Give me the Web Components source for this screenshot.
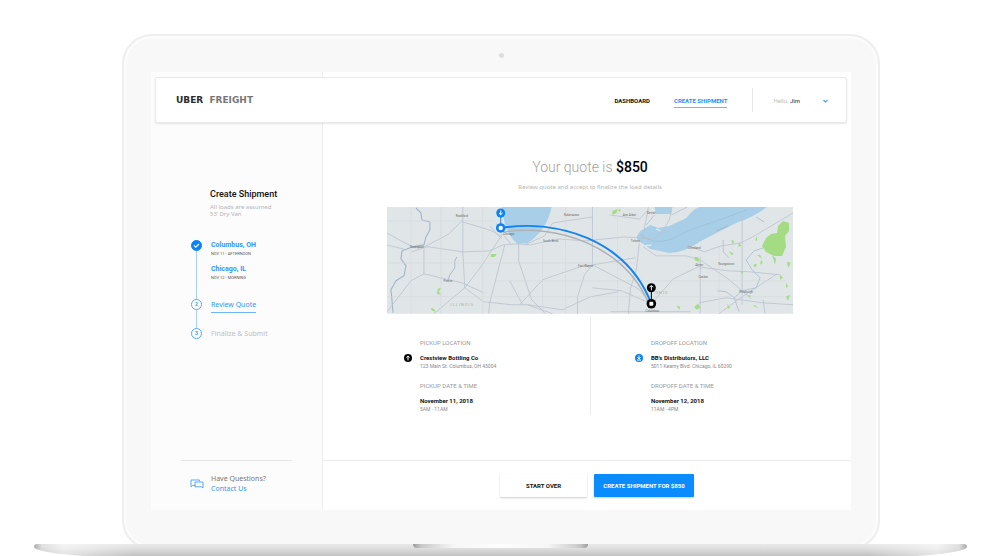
<!DOCTYPE html>
<html lang="en">
<head>
<meta charset="utf-8">
<meta name="viewport" content="width=device-width, initial-scale=1">
<title>Uber Freight – Create Shipment</title>
<style>
  body { margin: 0; background: #fff; font-family: Roboto, "Noto Sans", sans-serif; color: #111; }
</style>
</head>
<body>
<laptop-frame>
  <freight-app></freight-app>
</laptop-frame>

<script>
const define = (name, html, setup) => {
  const template = document.createElement('template');
  template.innerHTML = '<style>*{box-sizing:border-box}a{color:inherit;text-decoration:none}</style>' + html;
  customElements.define(name, class extends HTMLElement {
    constructor() {
      super();
      this.attachShadow({ mode: 'open' }).append(template.content.cloneNode(true));
    }
    connectedCallback() { if (setup) setup(this, this.shadowRoot); }
  });
};

/* Laptop body around the screen */
define('laptop-frame', `
<style>
  :host { display: flex; flex-direction: column; height: 100vh; padding: 34px 33px 0 34px; overflow: hidden; box-sizing: border-box; }
  .lid { flex: 1; display: flex; flex-direction: column; margin: 0 87px -6px 88px; padding: 16px 27px 38px;
    border: 2px solid #eee; border-radius: 30px; background: #f8f8f8; box-shadow: inset 0 0 0 2px #fcfcfc; }
  .camera { align-self: center; width: 5px; height: 5px; margin: 1px 0 14px; border-radius: 50%; background: #dedede; }
  .screen { flex: 1; display: grid; background: #fff; }
  .base { position: relative; height: 12px; flex: none; overflow: hidden; border-radius: 3px 3px 0 0; }
  .deck { height: 16px; display: flex; justify-content: center; align-items: flex-start;
    border-radius: 0 0 180px 180px / 0 0 13px 13px;
    background: linear-gradient(90deg, #aaa 0, #ddd8 8px, #fff8 30px, #fff0 100px, #fff0 calc(100% - 100px), #fff8 calc(100% - 30px), #ddd8 calc(100% - 8px), #aaa 100%),
      linear-gradient(#e9e9e9 0, #e0e0e0 4px, #c2c2c2 12px); }
  .notch { width: 175px; height: 4px; border-radius: 0 0 4px 4px;
    background: linear-gradient(90deg, #9c9c9c 0, #c8c8c8 8px, #f6f6f6 40px, #fdfdfd 50%, #f6f6f6 calc(100% - 40px), #c8c8c8 calc(100% - 8px), #9c9c9c 100%); }
</style>
<div class="lid"><div class="camera"></div><div class="screen"><slot></slot></div></div>
<div class="base"><div class="deck"><div class="notch"></div></div></div>`);

define('freight-app', `
<style>
  :host { display: grid; grid-template: auto 1fr / 172px 1fr; }
  side-bar { grid-area: 1 / 1 / 3 / 2; }
  top-bar { grid-area: 1 / 1 / 2 / 3; margin: 5px 4px 0; }
  main { grid-area: 2 / 2; display: flex; flex-direction: column; }
  .quote { flex: 1; padding: 32px 58px 0 64px; text-align: center; }
  h1 { margin: 0; font-size: 14px; line-height: 24px; font-weight: 300; color: #a2a2a2; }
  h1 b { font-weight: 500; color: #000; }
  .sub { margin: 4px 0 16px; font: 6px/8px "Noto Sans", sans-serif; color: #b4b4b4; }
  .details { display: grid; grid-template-columns: 1fr 1fr; margin-top: 3px; text-align: left; }
  .details > * { padding: 21px 0 2px 17px; }
  .details > * + * { padding-left: 44px; border-left: 1px solid #ebebeb; }
  footer { display: flex; justify-content: center; gap: 7px; padding: 13px 0 13px 20px; border-top: 1px solid #ececec; }
</style>
<side-bar></side-bar>
<top-bar></top-bar>
<main>
  <section class="quote">
    <h1>Your quote is <b>$850</b></h1>
    <p class="sub">Review quote and accept to finalize the load details</p>
    <route-map></route-map>
    <div class="details">
      <stop-details kind="Pickup" name="Crestview Bottling Co" address="123 Main St. Columbus, OH 43004" date="November 11, 2018" time="5AM - 11AM"></stop-details>
      <stop-details kind="Dropoff" name="BB's Distributors, LLC" address="5011 Kearny Blvd. Chicago, IL 60290" date="November 12, 2018" time="11AM - 4PM"></stop-details>
    </div>
  </section>
  <footer>
    <action-button>START OVER</action-button>
    <action-button primary>CREATE SHIPMENT FOR $850</action-button>
  </footer>
</main>`);

define('action-button', `
<style>
  :host { display: block; }
  button { display: block; min-width: 87px; height: 23px; padding: 0 8px; border: 0; border-radius: 1px; background: #fff; color: #111;
    font: 700 6px/8px Roboto, sans-serif; box-shadow: 0 1px 2px #0003; }
  :host([primary]) button { min-width: 100px; background: #0a8cff; color: #fff; }
</style>
<button type="button"><slot></slot></button>`);

define('top-bar', `
<style>
  :host { display: block; position: relative; }
  header { display: flex; align-items: center; height: 46px; padding: 0 18px 0 20px; background: #fff; border: 1px solid #e9e9e9; border-radius: 2px; box-shadow: 0 1px 2px #00000018; }
  .logo { margin-right: auto; font: 700 9px/12px "DejaVu Sans", sans-serif; color: #2b2b2b; }
  .logo span { color: #777; margin-left: 3px; }
  nav { display: flex; gap: 24px; font-size: 6px; line-height: 10px; font-weight: 700; }
  nav a { padding: 3px 0 1px; border-bottom: 1px solid transparent; }
  nav a[aria-current] { color: #1f8ffb; border-color: #6db5fb; }
  button { display: flex; align-items: center; gap: 23px; height: 24px; margin-left: 25px; padding: 1px 0 0 20px; border: 0; border-left: 1px solid #e6e6e6;
    background: none; font: 400 6px/8px Roboto, sans-serif; color: #bbb; }
  button b { color: #555; font-weight: 500; }
</style>
<header>
  <a class="logo" href="#">UBER<span> FREIGHT</span></a>
  <nav><a href="#">DASHBOARD</a><a href="#" aria-current="page">CREATE SHIPMENT</a></nav>
  <button type="button"><span>Hello, <b>Jim</b></span>
    <svg width="5" height="4" viewBox="0 0 5 4" fill="none" stroke="#4aa3fb" stroke-width="1.2"><path d="M.5 1l2 2 2-2"/></svg></button>
</header>`);

define('side-bar', `
<style>
  :host { display: flex; flex-direction: column; background: #fcfcfc; border-right: 1px solid #ededed; }
  h2 { margin: 116px 0 0 59px; font-size: 9px; line-height: 12px; font-weight: 500; }
  .note { margin: 4px 0 0 59px; font: 6px/7px "Noto Sans", sans-serif; color: #b4b4b4; }
  ol { list-style: none; margin: 22px 0 0 40px; padding: 0; }
  li { display: flex; }
  .help { display: flex; align-items: center; gap: 7px; margin: auto 30px 0 30px; padding: 13px 0 16px 9px; border-top: 1px solid #e6e6e6; font: 7px/10px "Noto Sans", sans-serif; color: #777; }
  .help a { display: block; color: #2f97fb; }
</style>
<h2>Create Shipment</h2>
<p class="note">All loads are assumed<br>53’ Dry Van</p>
<ol>
  <li><step-item state="done" number="1">
    <step-stop place="Columbus, OH" when="NOV 11 - AFTERNOON"></step-stop>
    <step-stop place="Chicago, IL" when="NOV 12 - MORNING"></step-stop></step-item></li>
  <li><step-item state="active" number="2">Review Quote</step-item></li>
  <li><step-item state="next" number="3">Finalize &amp; Submit</step-item></li>
</ol>
<div class="help">
  <svg width="14" height="10" viewBox="0 0 14 10" fill="none" stroke="#57a9f8" stroke-width="1"><path d="M5.5 6.500H2.500L1 7.800V1h8.500v1.200"/><path d="M5 3h8v6L11.600 7.800H5z"/></svg>
  <div>Have Questions?<a href="#">Contact Us</a></div>
</div>`);

define('step-item', `
<style>
  :host { display: grid; grid-template-columns: 11px auto; column-gap: 9px; font: 7px/11px "Noto Sans", sans-serif; }
  .rail { display: flex; flex-direction: column; align-items: center; }
  .dot { display: grid; place-items: center; width: 11px; height: 11px; border: 1px solid #55a8fa; border-radius: 50%; font: 700 5px/5px Roboto, sans-serif; color: #3b9bfa; }
  svg { display: none; }
  .line { flex: 1; width: 1px; background: #a6d1fb; }
  .body { padding-bottom: 18px; color: #2f97fb; }
  .body a { display: block; }
  :host([state=done]) .body { padding-bottom: 11px; }
  :host([state=done]) .dot { background: #0a84f5; border-color: #0a84f5; }
  :host([state=done]) .num { display: none; }
  :host([state=done]) svg { display: block; }
  :host([state=active]) .body { padding-bottom: 15px; }
  :host([state=active]) .body a { padding-bottom: 2px; border-bottom: 1px solid #6db5fb; }
  :host([state=next]) .body { color: #c0c0c0; }
  :host([state=next]) .line { display: none; }
</style>
<div class="rail"><span class="dot"><span class="num"></span><svg width="7" height="5" viewBox="0 0 7 5" fill="none" stroke="#fff" stroke-width="1.2"><path d="M1 2.400l1.700 1.700L6 1"/></svg></span><span class="line"></span></div>
<div class="body"><a href="#"><slot></slot></a></div>`,
(el, root) => { root.querySelector('.num').textContent = el.getAttribute('number'); });

define('step-stop', `
<style>
  :host { display: block; font: 700 7px/10px Roboto, sans-serif; padding-bottom: 7px; }
  .when { display: block; font-size: 4px; line-height: 7px; font-weight: 400; color: #555; }
</style>
<span class="place"></span><span class="when"></span>`,
(el, root) => {
  root.querySelector('.place').textContent = el.getAttribute('place');
  root.querySelector('.when').textContent = el.getAttribute('when');
});

define('stop-details', `
<style>
  :host { display: grid; grid-template-columns: 8px 1fr; column-gap: 8px; }
  .icon { padding-top: 16px; }
  svg { display: block; }
  h3 { margin: 0 0 6px; font-size: 6px; line-height: 10px; font-weight: 400; color: #999; }
  .strong { margin: 0; font-size: 6px; line-height: 8px; font-weight: 700; color: #111; }
  .plain { margin: 0 0 11px; font-size: 5px; line-height: 8px; color: #888; }
  .plain:last-child { margin-bottom: 0; }
</style>
<div class="icon"></div>
<div>
  <h3 class="where"></h3><p class="strong name"></p><p class="plain address"></p>
  <h3 class="whenTitle"></h3><p class="strong date"></p><p class="plain time"></p>
</div>`,
(el, root) => {
  const kind = el.getAttribute('kind');
  const up = kind === 'Pickup';
  root.querySelector('.where').textContent = kind.toUpperCase() + ' LOCATION';
  root.querySelector('.whenTitle').textContent = kind.toUpperCase() + ' DATE & TIME';
  for (const key of ['name', 'address', 'date', 'time']) root.querySelector('.' + key).textContent = el.getAttribute(key);
  root.querySelector('.icon').innerHTML = `<svg width="8" height="8" viewBox="0 0 8 8" fill="none" stroke="#fff"><circle cx="4" cy="4" r="4" fill="${up ? '#000' : '#0a84f5'}" stroke="none"/><path d="${up ? 'M4 6.4V2M2.4 3.4L4 1.9l1.6 1.5' : 'M4 1.6v3M2.4 3.4L4 4.9l1.6-1.5M2 6h4'}"/></svg>`;
});

/* Route map: Lake Michigan on the left, Lake Erie on the right */
define('route-map', `
<style>
  :host { display: block; }
  svg { display: block; width: 100%; height: auto; }
  text { font: 3px Roboto, sans-serif; fill: #666; text-anchor: middle; }
  .state { font-size: 4px; fill: #a5adb5; }
</style>
<svg viewBox="0 0 407 107" role="img" aria-label="Route between Chicago and Columbus">
  <rect width="407" height="107" fill="#e0e6e7"/>
  <g fill="#a9cfe8">
    <path d="M115 0H165Q163 12 155 23Q149 31 141 36L131 37Q126 33 123 28Q117 18 115 0Z"/>
    <path d="M313 0H381Q368 10 350 16Q330 26 313 35Q300 45 283 46L264 42L253 34L250 30L254 24L264 18L272 21L283 19L300 11Q306 3 313 0Z"/>
    <path d="M268 0H285V7H270Z"/>
  </g>
  <g fill="none" stroke="#e0e6e7" stroke-width="1.5"><path d="M258 39l7-1M270 22l4 2"/></g>
  <g fill="none" stroke="#9cbdd0" stroke-width=".7">
    <path d="M253 27Q265 38 283 33L304 23L336 12L360 3"/>
    <path d="M268 8L260 18"/>
  </g>
  <g fill="none" stroke="#9fb6ca" stroke-width="1.1" stroke-linejoin="round">
    <path d="M29 1l5 5 1 7 8 2v8l-4 7-2 8-12 2-10 4-1 8 5 7-2 10-8 5-5 9 1 11 1 12"/>
    <path d="M70 50l-2 4 0 7-5 7-2 6 M342 19l-12 5" stroke-width=".9"/>
    <path d="M370 10l8 5M343 51l-6-6v-12M331 84l9 1 8 6 5 14M348 91l8-7 14-3 4-10-8-8-6-10 8-9 15-5" stroke-width=".7"/>
  </g>
  <g fill="none" stroke="#bac2cd" stroke-width=".8" stroke-linejoin="round">
    <path d="M0 26l14 8 14 7 14-1 34 5 27-1 13-6 14-1 14 1 28-6 26 2 40-4 30 2 7-5 8-14 4-19"/>
    <path d="M76 0v45l2 36 19 14 28 3h16l25 9M76 15l27 8 11 6M76 13l-14 14-28 15-9 3"/>
    <path d="M37 41v26l38 9 22 10M78 81L47 107M78 81l16-21 22-33 8 10M118 38l-15 58-1 11M132 37v17l13 39 14 14"/>
    <path d="M133 98l23-25 14-5 24-8 30-5 25-4M206 0v58l-8 10-7 22v17M206 58l46 24 13 15 22-25 25-12 30 4 22 1 30 3"/>
    <path d="M253 36l-3 26-6 20-2 25M257 40l13 9 30 0 14 4 29 20 22 19M300 38l18 7 17-6 20-3 15-8 37-22"/>
    <path d="M314 50v57M313 96l27-5 36 5 31 2M377 93l2 14M356 9v89M391 67l-38 25-20 15M285 8l16-8M262 0l-4 22-3 14"/>
    <path d="M138 38l20-9 8-13 40-6M109 16l10 11M103 19l12 13M136 98l-13-24M141 98l35 5 28-13 28-5"/>
    <path d="M0 105l24-31 13-7M0 38l20 5M223 8l30 4 10-10M224 105h80M265 97l-30-13-29-3"/>
  </g>
  <g fill="none" stroke="#d3d9de" stroke-width=".6">
    <path d="M0 14h114M0 90h407M24 0v107M96 0v107M179 0v107M231 0v107M54 0v107M156 37v70M333 40v67M0 56h250M110 74h290"/>
  </g>
  <g fill="#a4dc84">
    <path d="M380 31l5-4 6-1 1-7 5-5 6 2v8l-4 5 1 11-4 9-8 0-8-4-4-6z"/>
    <path d="M226 4l5-2-1 4-4 2zM231 3l3-1v3zM51 82l3-1-2 4 2 3-4-1zM44 101l3 1 2 3-4-1zM104 47h6l-2 3h-4zM308 50l4 0 1 5-4-1zM345 33l3 1-1 4zM353 35l2 4-3 1zM343 44l5 3-3 1z"/>
    <path d="M308 100l4-3 2 4-4 2zM290 99l4 1-1 3zM367 58l4-1-2 4zM375 53l2 3-3 2zM386 48l4 4-1 6zM394 68l3 3-3 2zM401 55l4 1-3 5zM400 90l4-2-2 6zM354 64l3 1-1 2zM369 33l2-4v5zM371 48l5 4-2-4zM400 76l2 4-2 1zM341 97l3 4-2 1zM368 98l4 3-4-1zM362 88l3 1-2 2z"/>
  </g>
  <g>
    <text x="75" y="10">Rockford</text><text x="30" y="41">Davenport</text><text x="61" y="75">Peoria</text>
    <text x="122" y="28">Chicago</text><text x="185" y="9">Kalamazoo</text><text x="164" y="35">South Bend</text><text x="199" y="60">Fort Wayne</text>
    <text x="243" y="9">Ann Arbor</text><text x="265" y="7">Detroit</text><text x="249" y="35">Toledo</text>
    <text x="308" y="42">Cleveland</text><text x="313" y="59">Akron</text><text x="317" y="71">Canton</text><text x="340" y="58">Youngstown</text>
    <text x="360" y="86">Pittsburgh</text><text x="266" y="105">Columbus</text>
    <text class="state" x="75" y="99">I L L I N O I S</text><text class="state" x="275" y="87">O H I O</text>
  </g>
  <path d="M117 25C170 17 238 38 263 98" fill="none" stroke="#aeb2b4" stroke-width="1.5"/>
  <path d="M114 21C170 12 240 32 265 97" fill="none" stroke="#1583ef" stroke-width="2"/>
  <path d="M114 6v15" stroke="#1583ef"/>
  <path d="M265 81v16" stroke="#000"/>
  <g fill="#0a84f5"><circle cx="114" cy="6" r="4.5"/><circle cx="114" cy="21" r="4.8"/></g>
  <g fill="#000"><circle cx="265" cy="81" r="4.5"/><circle cx="265" cy="97" r="4.8"/></g>
  <g fill="#fff"><circle cx="114" cy="21" r="2.2"/><rect x="263" y="95" width="4" height="4" rx="1"/></g>
  <g fill="none" stroke="#fff" stroke-width="1"><path d="M114 3.500v4M112.200 6l1.800 1.800L115.800 6M265 83.500v-4.500M263.200 80.500l1.800-1.800 1.800 1.800"/></g>
</svg>`);
</script>
</body>
</html>
